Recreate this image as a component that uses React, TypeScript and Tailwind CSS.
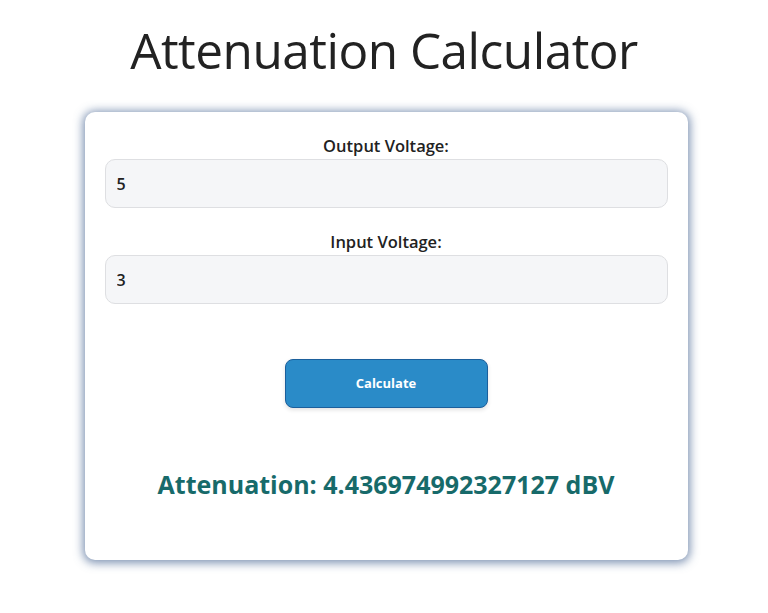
import { useState } from 'react'

function Field({ label, value, onChange }: { label: string; value: string; onChange: (v: string) => void }) {
  return (
    <div className="flex flex-col items-center">
      <label className="text-[16.5px] font-semibold text-[#222] leading-5 mb-[3px]">{label}</label>
      <input
        value={value}
        onChange={(e) => onChange(e.target.value)}
        className="w-full h-[49px] rounded-[10px] border border-[#dedfe2] bg-[#f5f6f8] px-[11px] text-[16px] font-semibold text-[#222] outline-none"
      />
    </div>
  )
}

export default function App() {
  const [vout, setVout] = useState('5')
  const [vin, setVin] = useState('3')
  const [result, setResult] = useState<number | null>(20 * Math.log10(5 / 3))

  const calculate = () => {
    const o = parseFloat(vout)
    const i = parseFloat(vin)
    if (!isNaN(o) && !isNaN(i) && i !== 0) setResult(20 * Math.log10(o / i))
  }

  return (
    <div className="min-h-screen bg-white flex flex-col items-center font-['Open_Sans',sans-serif]">
      <h1 className="mt-[19px] text-[49.5px] font-normal text-[#222] leading-[62px] tracking-[-0.5px]">
        Attenuation Calculator
      </h1>
      <div className="mt-[31px] ml-[4px] w-[603px] h-[448px] rounded-[10px] bg-white shadow-[0_1px_10px_2px_rgba(70,100,145,0.7)] px-[20px] pt-[24px] flex flex-col">
        <Field label="Output Voltage:" value={vout} onChange={setVout} />
        <div className="h-[24px]" />
        <Field label="Input Voltage:" value={vin} onChange={setVin} />
        <div className="flex justify-center mt-[55px]">
          <button
            onClick={calculate}
            className="w-[203px] h-[49px] rounded-[8px] bg-[#2a8bc8] border border-[#1b5f9c] text-white text-[13px] font-bold shadow-[0_2px_4px_rgba(0,0,0,0.12)]"
          >
            Calculate
          </button>
        </div>
        {result !== null && (
          <div className="mt-[62px] text-center text-[25px] font-bold text-[#176a6a] leading-7">
            Attenuation: {String(result)} dBV
          </div>
        )}
      </div>
    </div>
  )
}
